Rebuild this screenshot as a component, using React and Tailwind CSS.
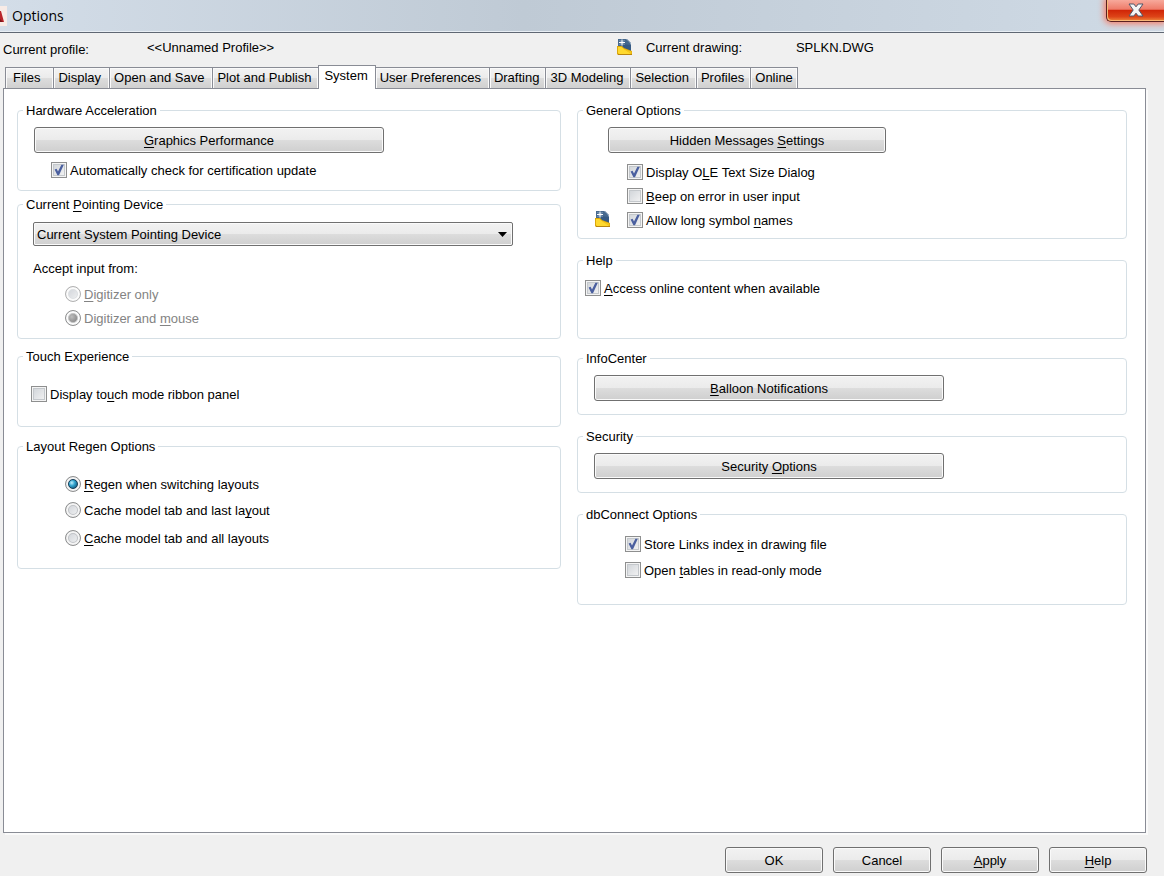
import { useState } from "react";
import clsx from "clsx";

const tabs = [
    { name: "Files", pad: "pl-[7px] pr-[13px]" },
    { name: "Display", pad: "pl-[4px] pr-[8px]" },
    { name: "Open and Save", pad: "pl-[4px] pr-[8px]" },
    { name: "Plot and Publish", pad: "pl-[4px] pr-[7px]" },
    { name: "System", pad: "pl-[5px] pr-[7px]" },
    { name: "User Preferences", pad: "pl-[4px] pr-[8px]" },
    { name: "Drafting", pad: "pl-[4px] pr-[6px]" },
    { name: "3D Modeling", pad: "pl-[4px] pr-[7px]" },
    { name: "Selection", pad: "pl-[4px] pr-[7px]" },
    { name: "Profiles", pad: "pl-[4px] pr-[6px]" },
    { name: "Online", pad: "pl-[4px] pr-[4px]" },
];

// Underlines the access key, "&" stands before the letter
const Mnemonic = ({ text }) => {
    const at = text.indexOf("&");
    if (at < 0) return text;
    return (
        <>
            {text.slice(0, at)}
            <u className="underline decoration-1 underline-offset-2 [text-decoration-skip-ink:none]">{text[at + 1]}</u>
            {text.slice(at + 2)}
        </>
    );
};

const PushButton = ({ text, className }) => (
    <button
        type="button"
        className={clsx(
            "block h-[26px] max-w-full rounded-[3px] border border-[#707070] bg-[linear-gradient(#f2f2f2,#ebebeb_50%,#dddddd_50%,#cfcfcf)] pt-[2px] text-center leading-4 shadow-[inset_0_0_0_1px_#fafafa]",
            className
        )}
    >
        <Mnemonic text={text} />
    </button>
);

const Group = ({ title, className, children }) => (
    <fieldset className={clsx("min-w-0 rounded-[4px] border border-[#d5dfe5] px-[5px]", className)}>
        <legend className="h-4 px-[3px]">
            <Mnemonic text={title} />
        </legend>
        {children}
    </fieldset>
);

const CheckBox = ({ text, checked = false, className }) => {
    const [on, setOn] = useState(checked);
    return (
        <label className={clsx("flex h-4 w-fit items-start gap-[3px]", className)}>
            <span className="relative size-4 shrink-0">
                <input
                    type="checkbox"
                    checked={on}
                    onChange={() => setOn(!on)}
                    className="block size-4 appearance-none border border-[#8e8f8f] bg-linear-to-br from-[#cdd1d6] to-[#f6f6f6] shadow-[inset_0_0_0_1px_#f4f4f4,inset_0_0_0_2px_#c4c8cc]"
                />
                {on && (
                    <svg viewBox="0 0 16 16" className="pointer-events-none absolute inset-0 size-4">
                        <path d="M3.6 7.6 5.6 6.8 7 9.4 10.4 2.8 12.8 2.8 8 13.2 6.4 13.2Z" fill="#4a5f9f" />
                    </svg>
                )}
            </span>
            <span>
                <Mnemonic text={text} />
            </span>
        </label>
    );
};

const Radio = ({ text, name, checked, disabled, className }) => (
    <label className={clsx("flex h-4 w-fit items-start gap-[3px]", disabled && "text-[#838383]", className)}>
        <span className="relative size-4 shrink-0">
            <input
                type="radio"
                name={name}
                defaultChecked={checked}
                disabled={disabled}
                className={clsx(
                    "peer block size-4 appearance-none rounded-full border bg-linear-to-br from-[#cbcfd5] to-[#f6f6f6]",
                    disabled
                        ? "border-[#b1b1b1] shadow-[inset_0_0_0_2px_#fbfbfb,inset_0_0_0_3px_#dcdfe2] checked:border-[#8e8f8f]"
                        : "border-[#8e8f8f] shadow-[inset_0_0_0_2px_#f4f4f4,inset_0_0_0_3px_#c0c3c7]"
                )}
            />
            <span
                className={clsx(
                    "pointer-events-none absolute inset-[3px] hidden rounded-full border peer-checked:block",
                    disabled
                        ? "border-[#c4c4c4] bg-radial-[at_35%_35%] from-[#bdbdbd] to-[#7d7d7d]"
                        : "border-[#14405c] bg-radial-[at_35%_35%] from-[#c4f0fc] via-[#31a5d0] via-40% to-[#0c3f63]"
                )}
            />
        </span>
        <span>
            <Mnemonic text={text} />
        </span>
    </label>
);

const DrawingIcon = () => (
    <svg viewBox="0 0 16 17" className="h-[17px] w-4 shrink-0" aria-hidden="true">
        <path d="M1 0H10L14 4V14H1Z" fill="#46698f" />
        <path d="M6 5 14 6V13L6 9Z" fill="#365a84" />
        <path d="M9 0H10L14 4V6Q12 2 9 0Z" fill="#a9bacb" />
        <path d="M0 7H5L7 9 15 12V16H1L0 15Z" fill="#dca70a" />
        <path d="M1 8H4.5L7 10 14 14.5 13 15H2L1 14Z" fill="#ffd92e" />
        <path d="M6 9.5 14.5 12.5V15L12 13.5Z" fill="#f7c81a" />
        <path d="M1 15.5H15" stroke="#b98510" />
        <path d="M2.5 1 7.5 6M7.5 1 2.5 6" stroke="#9fb8d2" strokeWidth="0.8" />
        <path d="M5 0.5V6.5M2 3.5H8" stroke="#fff" strokeWidth="1.1" />
    </svg>
);

const TitleBar = () => (
    <header className="flex h-[33px] items-start justify-between overflow-hidden border-b border-[#5f6773] bg-linear-to-r from-[#d3dde8] via-[#bfcad5] via-45% to-[#cfdae5] shadow-[inset_0_-1px_0_#e8eef4]">
        <div className="flex h-8 items-center gap-[5px]">
            <svg viewBox="0 0 7 20" className="h-5 w-[7px]" aria-hidden="true">
                <path d="M0 0H7V20H0Z" fill="#f8ebe6" />
                <path d="M0 5 1 5 4 16H0Z" fill="#b9252b" />
                <path d="M0 13 3 16H0Z" fill="#7e1519" />
            </svg>
            <h1 className="font-['Open_Sans',sans-serif] text-[14px] leading-4">Options</h1>
        </div>
        <button
            type="button"
            aria-label="Close"
            className="flex h-[22px] w-[58px] justify-center rounded-bl-[5px] border border-t-0 border-r-0 border-[#5b2020] bg-[linear-gradient(#f7a99b,#ee7a68_45%,#cf2205_46%,#dd4418_80%,#f08a3c)] shadow-[0_0_6px_2px_#f5806c,inset_1px_-1px_0_#f8b878]"
        >
            <svg viewBox="0 0 16 15" className="mt-[3px] h-[15px] w-4" aria-hidden="true">
                <path
                    d="M1 1H5.8L8 3.8 10.2 1H15L10.8 7 15 13H10.2L8 10.2 5.8 13H1L5.2 7Z"
                    fill="#f4f4f4"
                    stroke="#4e5568"
                    strokeLinejoin="round"
                />
            </svg>
        </button>
    </header>
);

const App = () => {
    const [active, setActive] = useState("System");

    return (
        <div className="flex min-h-screen flex-col bg-[#f0f0f0] font-['Liberation_Sans',Arial,sans-serif] text-[13px] leading-[17px] text-black">
            <TitleBar />

            <div className="flex h-8 items-start pt-[6px]">
                <div className="flex w-[53%] pl-[3px]">
                    <span className="w-36 pt-[2px]">Current profile:</span>
                    <span>&lt;&lt;Unnamed Profile&gt;&gt;</span>
                </div>
                <DrawingIcon />
                <span className="ml-[13px] w-[150px]">Current drawing:</span>
                <span>SPLKN.DWG</span>
            </div>

            <div role="tablist" className="flex h-[23px] items-end pl-[5px]">
                {tabs.map(({ name, pad }) => (
                    <button
                        key={name}
                        type="button"
                        role="tab"
                        aria-selected={active === name}
                        onClick={() => setActive(name)}
                        className={clsx(
                            "border-t border-l border-[#898c95] leading-4 whitespace-nowrap last:border-r",
                            pad,
                            active === name
                                ? "relative -mb-px h-6 border-r bg-white pb-[3px] [&+button]:border-l-0"
                                : "h-[21px] bg-[linear-gradient(#f3f3f3,#ebebeb_50%,#dddddd_50%,#d0d0d0)] shadow-[inset_1px_1px_0_#fafafa,inset_-1px_0_0_#fafafa]"
                        )}
                    >
                        {name}
                    </button>
                ))}
            </div>

            <main className="mr-[18px] ml-[3px] grid flex-1 grid-cols-[544fr_550fr] content-start items-start gap-x-4 border border-[#898c95] bg-white pt-[13px] pr-[18px] pb-4 pl-[13px] shadow-[2px_2px_0_#fafafa]">
                <div className="flex min-w-0 flex-col">
                    <Group title="Hardware Acceleration" className="pt-[9px] pb-3">
                        <PushButton text="&Graphics Performance" className="ml-[11px] w-[350px]" />
                        <CheckBox text="Automatically check for certification update" checked className="mt-[9px] ml-7" />
                    </Group>

                    <Group title="Current &Pointing Device" className="mt-[5px] pt-[10px] pb-3">
                        <div className="relative ml-[10px] w-[480px] max-w-full">
                            <select
                                aria-label="Current Pointing Device"
                                className="block h-6 w-full appearance-none rounded-[2px] border border-[#707070] bg-[linear-gradient(#f2f2f2,#ebebeb_50%,#dddddd_50%,#cfcfcf)] pt-[2px] pl-[3px] leading-4 shadow-[inset_0_0_0_1px_#fafafa]"
                            >
                                <option>Current System Pointing Device</option>
                            </select>
                            <svg viewBox="0 0 9 5" className="pointer-events-none absolute top-[10px] right-[6px] h-[5px] w-[9px]">
                                <path d="M0 0H9L4.5 5Z" />
                            </svg>
                        </div>
                        <p className="mt-[14px] ml-[10px] h-4">Accept input from:</p>
                        <Radio name="digitizer" text="&Digitizer only" disabled className="mt-[10px] ml-[42px]" />
                        <Radio name="digitizer" text="Digitizer and &mouse" checked disabled className="mt-2 ml-[42px]" />
                    </Group>

                    <Group title="Touch Experience" className="mt-[9px] pt-[22px] pb-6">
                        <CheckBox text="Display to&uch mode ribbon panel" className="ml-2" />
                    </Group>

                    <Group title="Layout Regen Options" className="mt-[11px] pt-[22px] pb-[22px]">
                        <Radio name="regen" text="&Regen when switching layouts" checked className="ml-[42px]" />
                        <Radio name="regen" text="Cache model tab and last la&yout" className="mt-[10px] ml-[42px]" />
                        <Radio name="regen" text="&Cache model tab and all layouts" className="mt-3 ml-[42px]" />
                    </Group>
                </div>

                <div className="flex min-w-0 flex-col">
                    <Group title="General Options" className="pt-[9px] pb-[10px]">
                        <PushButton text="Hidden Messages &Settings" className="ml-[25px] w-[278px]" />
                        <CheckBox text="Display O&LE Text Size Dialog" checked className="mt-[11px] ml-11" />
                        <CheckBox text="&Beep on error in user input" className="mt-2 ml-11" />
                        <div className="mt-2 ml-3 flex h-4 items-end gap-4">
                            <DrawingIcon />
                            <CheckBox text="Allow long symbol &names" checked />
                        </div>
                    </Group>

                    <Group title="Help" className="mt-[13px] pt-3 pb-[42px]">
                        <CheckBox text="&Access online content when available" checked className="ml-[2px]" />
                    </Group>

                    <Group title="InfoCenter" className="mt-[11px] pt-[9px] pb-[13px]">
                        <PushButton text="&Balloon Notifications" className="ml-[11px] w-[350px]" />
                    </Group>

                    <Group title="Security" className="mt-[13px] pt-[9px] pb-[13px]">
                        <PushButton text="Security &Options" className="ml-[11px] w-[350px]" />
                    </Group>

                    <Group title="dbConnect Options" className="mt-[13px] pt-[14px] pb-[26px]">
                        <CheckBox text="Store Links inde&x in drawing file" checked className="ml-[42px]" />
                        <CheckBox text="Open &tables in read-only mode" className="mt-[10px] ml-[42px]" />
                    </Group>
                </div>
            </main>

            <footer className="flex justify-end gap-[10px] pt-[14px] pr-[17px] pb-[3px]">
                <PushButton text="OK" className="w-[98px]" />
                <PushButton text="Cancel" className="w-[98px]" />
                <PushButton text="&Apply" className="w-[98px]" />
                <PushButton text="&Help" className="w-[98px]" />
            </footer>
        </div>
    );
};

export default App;
